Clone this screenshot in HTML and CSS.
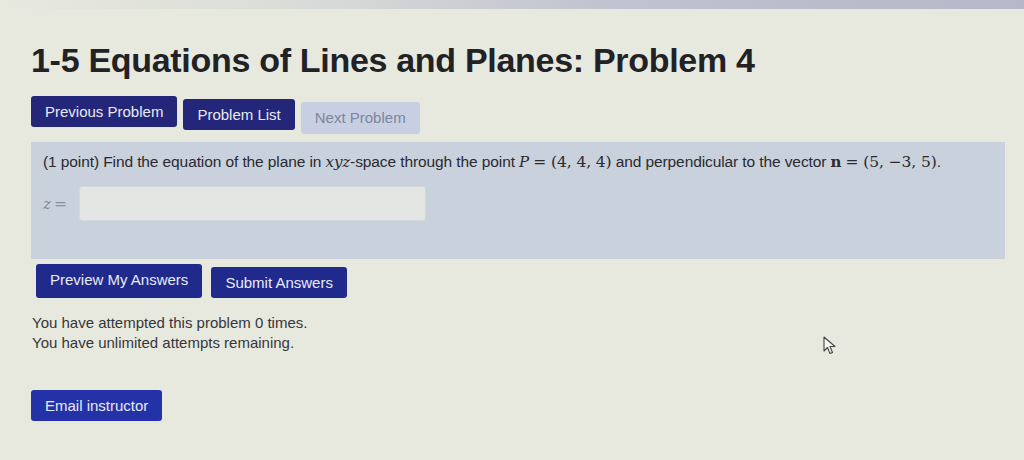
FILE: index.html
```html
<!DOCTYPE html>
<html>
<head>
<meta charset="utf-8">
<link rel="stylesheet" href="styles.css">
</head>
<body>
<div class="topband"></div>
<main class="page">
  <h1 class="title">1-5 Equations of Lines and Planes: Problem 4</h1>
  <nav class="nav">
    <span class="btn">Previous Problem</span>
    <span class="btn">Problem List</span>
    <span class="btn disabled">Next Problem</span>
  </nav>
  <section class="problem">
    <p class="statement">(1 point) Find the equation of the plane in <span class="m">xyz</span>-space through the point <span class="m">P</span> <span class="mr">= (4, 4, 4)</span> and perpendicular to the vector <span class="mb">n</span> <span class="mr">= (5, &minus;3, 5)</span>.</p>
    <div class="answer">
      <span class="m zlabel">z</span><span class="mr eq">=</span>
      <span class="input"></span>
    </div>
  </section>
  <div class="actions">
    <span class="btn">Preview My Answers</span>
    <span class="btn">Submit Answers</span>
  </div>
  <p class="info">You have attempted this problem 0 times.<br>You have unlimited attempts remaining.</p>
  <div class="email">
    <span class="btn bright">Email instructor</span>
  </div>
</main>
<svg class="cursor" width="14" height="20" viewBox="0 0 14 20">
  <path d="M1 1 L1 15 L4.5 11.5 L7 17.5 L9.5 16.5 L7 10.5 L12 10.5 Z" fill="#f4f5ef" stroke="#444" stroke-width="1.1" stroke-linejoin="round"/>
</svg>
</body>
</html>
```

FILE: styles.css
```css
html, body {
  margin: 0;
  padding: 0;
}
body {
  width: 1024px;
  height: 460px;
  overflow: hidden;
  background: #e7e9df;
  font-family: "Liberation Sans", Arial, sans-serif;
  color: #2e2e33;
  position: relative;
}
.topband {
  height: 9px;
  background: linear-gradient(90deg, #e7e9df 0%, #dcdfd8 25%, #bfc3cf 60%, #b4b8c8 100%);
}
.page {
  padding: 30px 19px 0 31px;
}
.title {
  margin: 0;
  font-size: 34px;
  font-weight: bold;
  color: #222226;
  line-height: 42px;
  letter-spacing: -0.3px;
}
.nav {
  display: flex;
  gap: 6px;
  margin-top: 15px;
  align-items: flex-start;
}
.btn {
  display: inline-block;
  background: #24267a;
  color: #e9ebf2;
  font-size: 15px;
  line-height: 31px;
  padding: 0 14px;
  border-radius: 3px;
  white-space: nowrap;
}
.nav .btn:nth-child(2) { margin-top: 3px; }
.btn.disabled {
  background: #c9cfe2;
  color: #7c869e;
  margin-top: 6px;
  line-height: 32px;
}
.problem {
  margin-top: 8px;
  background: #c9d1dc;
  height: 117px;
  padding: 10px 12px 0 12px;
  box-sizing: border-box;
}
.statement {
  margin: 0;
  font-size: 15.5px;
  line-height: 20px;
  color: #2a2a30;
  letter-spacing: -0.1px;
}
.m {
  font-family: "DejaVu Serif", "Liberation Serif", serif;
  font-style: italic;
  font-size: 15px;
}
.mr {
  font-family: "DejaVu Serif", "Liberation Serif", serif;
  font-size: 15.5px;
}
.mb {
  font-family: "DejaVu Serif", "Liberation Serif", serif;
  font-weight: bold;
  font-size: 15px;
}
.answer {
  display: flex;
  align-items: center;
  margin-top: 14px;
  color: #8a919c;
}
.zlabel { color: #7f8793; }
.eq { margin-left: 3px; color: #8a929c; }
.input {
  display: block;
  margin-left: 12px;
  width: 345px;
  height: 33px;
  background: #e3e6e2;
  border: 1px solid #d3d8dd;
  border-radius: 3px;
}
.actions {
  display: flex;
  gap: 9px;
  margin-top: 5px;
  padding-left: 5px;
}
.actions .btn { background: #1f2a8c; line-height: 31px; padding: 0 14px; }
.actions .btn:nth-child(2) { margin-top: 3px; }
.info {
  margin: 15px 0 0 1px;
  font-size: 15px;
  line-height: 20px;
  color: #35363b;
}
.email {
  margin-top: 37px;
}
.btn.bright {
  background: #2432a8;
  line-height: 31px;
  padding: 0 14px;
  font-size: 15px;
}
.cursor {
  position: absolute;
  left: 823px;
  top: 336px;
}
```
